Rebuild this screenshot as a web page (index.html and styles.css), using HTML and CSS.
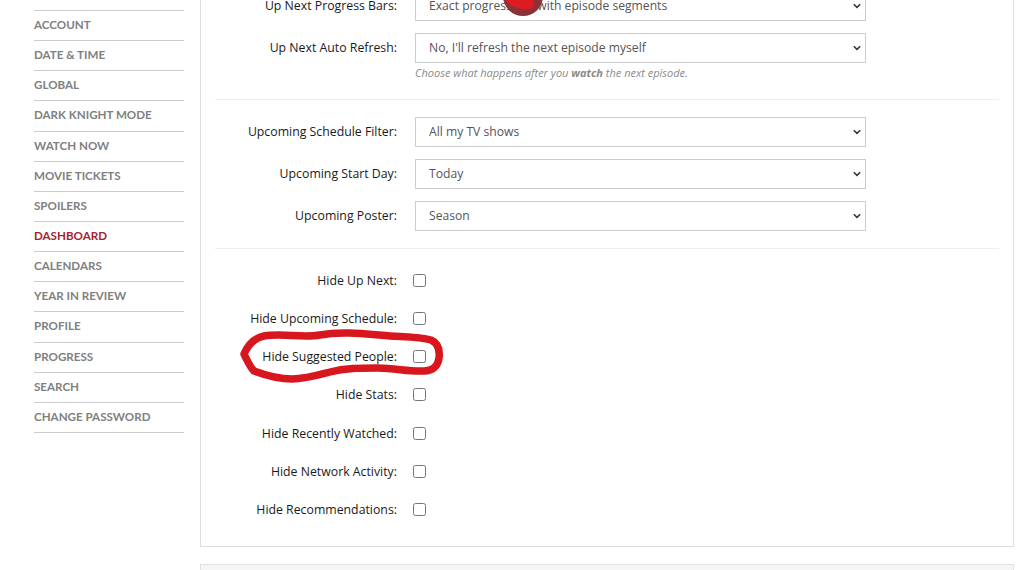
FILE: index.html
```html
<!DOCTYPE html>
<html lang="en">
<head>
<meta charset="utf-8">
<title>Settings</title>
<link rel="stylesheet" href="styles.css">
</head>
<body>
<div class="page">
  <nav class="side">
    <a class="side-item">Account</a>
    <a class="side-item">Date &amp; Time</a>
    <a class="side-item">Global</a>
    <a class="side-item">Dark Knight Mode</a>
    <a class="side-item">Watch Now</a>
    <a class="side-item">Movie Tickets</a>
    <a class="side-item">Spoilers</a>
    <a class="side-item active">Dashboard</a>
    <a class="side-item">Calendars</a>
    <a class="side-item">Year in Review</a>
    <a class="side-item">Profile</a>
    <a class="side-item">Progress</a>
    <a class="side-item">Search</a>
    <a class="side-item">Change Password</a>
  </nav>
  <main class="main">
    <section class="card">
      <div class="group">
        <div class="row"><label class="lbl">Up Next Progress Bars:</label><select class="sel"><option>Exact progress bar with episode segments</option></select></div>
        <div class="row"><label class="lbl">Up Next Auto Refresh:</label><select class="sel"><option>No, I'll refresh the next episode myself</option></select></div>
        <p class="hint">Choose what happens after you <b>watch</b> the next episode.</p>
      </div>
      <hr class="rule rule-first">
      <div class="group">
        <div class="row"><label class="lbl">Upcoming Schedule Filter:</label><select class="sel"><option>All my TV shows</option></select></div>
        <div class="row"><label class="lbl">Upcoming Start Day:</label><select class="sel"><option>Today</option></select></div>
        <div class="row"><label class="lbl">Upcoming Poster:</label><select class="sel"><option>Season</option></select></div>
      </div>
      <hr class="rule rule-second">
      <div class="checks">
        <div class="check-row"><label class="lbl">Hide Up Next:</label><input class="chk" type="checkbox"></div>
        <div class="check-row"><label class="lbl">Hide Upcoming Schedule:</label><input class="chk" type="checkbox"></div>
        <div class="check-row"><label class="lbl">Hide Suggested People:</label><input class="chk" type="checkbox"></div>
        <div class="check-row"><label class="lbl">Hide Stats:</label><input class="chk" type="checkbox"></div>
        <div class="check-row"><label class="lbl">Hide Recently Watched:</label><input class="chk" type="checkbox"></div>
        <div class="check-row"><label class="lbl">Hide Network Activity:</label><input class="chk" type="checkbox"></div>
        <div class="check-row"><label class="lbl">Hide Recommendations:</label><input class="chk" type="checkbox"></div>
      </div>
    </section>
    <section class="card-next"></section>
  </main>
</div>
<svg class="ink" width="1024" height="570" viewBox="0 0 1024 570" aria-hidden="true">
  <circle class="ink-edge" cx="523" cy="-4" r="20"/>
  <ellipse class="ink-fill" cx="519" cy="0" rx="16" ry="8" transform="rotate(20 519 0)"/>
  <path class="ink-line" d="M244 354C248 345 254 338 264 336C282 333 302 338 320 335C342 331 365 334 390 336C405 337 420 337 431 340C438 343 440 350 439 358C438 366 433 371 424 371C410 372 395 368 378 368C360 368 345 368 330 372C315 376 305 379 292 379C277 379 262 374 254 371C250 367 247 360 244 354Z"/>
</svg>
</body>
</html>
```
FILE: styles.css
```css
* { box-sizing: border-box; }
html, body { margin: 0; height: 570px; overflow: hidden; background: #fff; }
.page { display: flex; height: 570px; overflow: hidden; }
.side { width: 200px; flex: none; padding: 10px 16px 0 34px; font-family: Lato, "Liberation Sans", sans-serif; }
.side-item { display: block; height: 30.15px; line-height: 27px; border-top: 1px solid #ccc; font-size: 11.6px; font-weight: 700; color: #808080; text-transform: uppercase; }
.side-item:last-child { height: 31px; border-bottom: 1px solid #ccc; }
.active { color: #a8222b; }
.main { flex: none; width: 814px; height: 570px; display: flex; flex-direction: column; justify-content: flex-end; }
.card { flex: none; width: 814px; margin-bottom: 17px; padding: 0 14px 30px; border: 1px solid #ddd; border-top: 0; font-family: "Open Sans", sans-serif; }
.card-next { flex: none; height: 6px; width: 814px; background: #f5f5f5; border: 1px solid #e2e2e2; border-bottom: 0; }
.group { display: flex; flex-direction: column; gap: 12px; }
.row { display: flex; align-items: center; gap: 18px; height: 30px; }
.lbl { width: 182px; flex: none; text-align: right; font-size: 12.3px; font-weight: 500; color: #1a1a1a; }
.sel { appearance: none; width: 451px; height: 30px; padding: 0 10px 0 13px; border: 1px solid #ccc; border-radius: 0; background: #fff url("data:image/svg+xml,%3Csvg xmlns='http://www.w3.org/2000/svg' width='8' height='6'%3E%3Cpath d='M.8 1.2 4 4.4 7.2 1.2' fill='none' stroke='%23333' stroke-width='1.5'/%3E%3C/svg%3E") no-repeat right 4px center; font: 12.15px "Open Sans", sans-serif; color: #555; }
.hint { margin: -10px 0 0 200px; font-size: 11px; font-style: italic; color: #8a8a8a; line-height: 16px; }
.rule { height: 1px; margin: 18px 0; border: 0; background: #eee; }
.rule-first { margin-bottom: 17px; }
.rule-second { margin-top: 17px; }
.checks { display: flex; flex-direction: column; gap: 25.2px; padding-top: 7px; }
.check-row { display: flex; align-items: center; gap: 16px; height: 13px; }
.chk { width: 13px; height: 13px; margin: 0; }
.ink { position: absolute; left: 0; top: 0; pointer-events: none; }
.ink-line { fill: none; stroke: #d8161d; stroke-width: 7.5; stroke-linejoin: round; }
.ink-fill { fill: #e01a22; }
.ink-edge { fill: #8a3238; }
```
